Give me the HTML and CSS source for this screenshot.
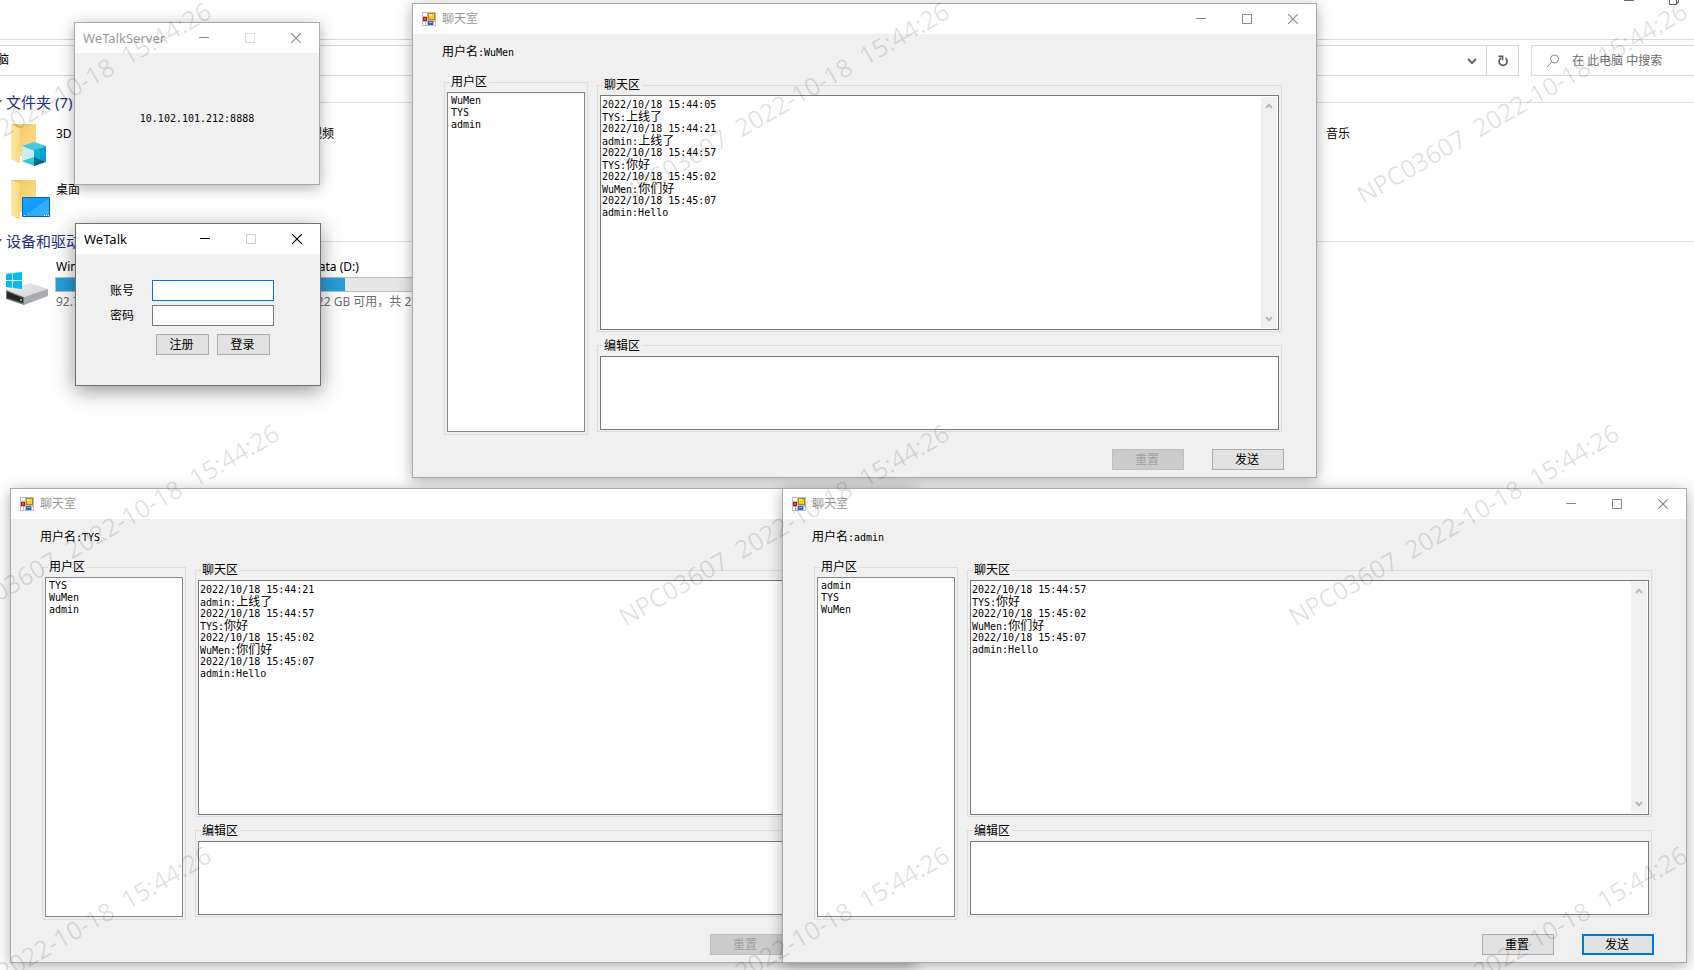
FILE: index.html
```html
<!DOCTYPE html>
<html lang="zh-CN">
<head>
<meta charset="utf-8">
<title>WeTalk</title>
<link rel="stylesheet" href="styles.css">
</head>
<body>
<svg class="defs" aria-hidden="true">
  <symbol id="i-min" viewBox="0 0 10 10"><path d="M0 4.5h10" fill="none" stroke="currentColor"/></symbol>
  <symbol id="i-max" viewBox="0 0 10 10"><path d="M.5.5h9v9h-9z" fill="none" stroke="currentColor"/></symbol>
  <symbol id="i-close" viewBox="0 0 10 10"><path d="M0 0l10 10M10 0L0 10" fill="none" stroke="currentColor" stroke-width="1.1"/></symbol>
  <symbol id="i-up" viewBox="0 0 8 6"><path d="M1 5l3-3.4L7 5" fill="none" stroke="currentColor" stroke-width="1.9"/></symbol>
  <symbol id="i-down" viewBox="0 0 8 6"><path d="M1 1l3 3.4L7 1" fill="none" stroke="currentColor" stroke-width="1.9"/></symbol>
  <symbol id="i-form" viewBox="0 0 14 14">
    <path d="M0 0h14v14H0z" fill="#b9bcc2"/>
    <path d="M1 1h4v3H1zM1 10h2v3H1zM4 10h1v3H4zM12 10h1v3h-1z" fill="#fff"/>
    <path d="M1 5h4v4H1z" fill="#b3160c"/><path d="M2 6h2v2H2z" fill="#e0604e"/>
    <path d="M6 1h7v7H6z" fill="#b98700"/><path d="M7 2h5v5H7z" fill="#fdc91c"/><path d="M7 2h3v2H7z" fill="#ffe68a"/>
    <path d="M6 9h5v4H6z" fill="#2f62c4"/><path d="M7 10h3v1H7z" fill="#86b2f4"/>
  </symbol>
  <symbol id="i-folder" viewBox="0 0 48 48">
    <path d="M5 4h25v32H12z" fill="url(#fold-b)"/>
    <path d="M5 4l9 4v36L5 39z" fill="url(#fold-f)"/>
  </symbol>
  <linearGradient id="fold-b" x1="0" y1="0" x2="1" y2="1"><stop offset="0" stop-color="#ecc463"/><stop offset="1" stop-color="#ffe08c"/></linearGradient>
  <linearGradient id="fold-f" x1="0" y1="0" x2="1" y2="0"><stop offset="0" stop-color="#ffe9a6"/><stop offset="1" stop-color="#fbd87f"/></linearGradient>
  <linearGradient id="blue" x1="0" y1="0" x2="1" y2="1"><stop offset="0" stop-color="#1ea3ff"/><stop offset=".5" stop-color="#0a9bff"/><stop offset=".51" stop-color="#2eacff"/><stop offset="1" stop-color="#38b0ff"/></linearGradient>
  <linearGradient id="metal" x1="0" y1="0" x2="1" y2="1"><stop offset="0" stop-color="#f0f0f2"/><stop offset="1" stop-color="#cfcfd3"/></linearGradient>
</svg>

<main class="desktop">
  <section class="explorer">
    <div class="caption">
      <svg class="glyph" viewBox="0 0 10 10"><path d="M0 5.500h10" stroke="#666"/></svg>
      <svg class="restore" viewBox="0 0 10 10"><path d="M.5 2.500h7v7h-7zM2.500 2V.5h7v7H8" fill="none" stroke="#666"/></svg>
    </div>
    <div class="toolbar">
      <div class="address">
        <span class="path">脑</span>
        <button class="tool" aria-label="展开"><svg viewBox="0 0 10 8"><path d="M1 2l4 4 4-4" fill="none" stroke="#666" stroke-width="2"/></svg></button>
        <button class="tool refresh" aria-label="刷新"><svg viewBox="0 0 12 12"><path d="M8.500 3.200A4 4 0 1 1 4 3" fill="none" stroke="#555" stroke-width="1.600"/><path d="M1.500 1.300h4v4" fill="none" stroke="#555" stroke-width="1.600"/></svg></button>
      </div>
      <label class="search">
        <svg viewBox="0 0 14 14"><circle cx="8.500" cy="5" r="4" fill="none" stroke="#888"/><path d="M5.700 8L1 13" stroke="#888"/></svg>
        <input type="text" aria-label="搜索" placeholder="在 此电脑 中搜索">
      </label>
    </div>
    <h2 class="group"><svg class="caret" viewBox="0 0 2 4"><path d="M0 0h2L0 3z" fill="#666"/></svg>文件夹 (7)</h2>
    <div class="tiles">
      <div class="tile">
        <svg class="pic" viewBox="0 0 48 48"><use href="#i-folder"/>
          <path d="M16 26l12-4 12 4-12 5z" fill="#4cc6e2"/><path d="M16 26l12 5v9l-12 2z" fill="#c9eff1"/><path d="M28 31l12-5v16l-12-4z" fill="#059bd4"/><path d="M28 30l6-2v12h-6z" fill="#08b3cf"/><path d="M16 41l12-4v9z" fill="#35c8d8"/><path d="M28 37l12 5-12 4z" fill="#04688c"/></svg>
        <span>3D</span>
      </div>
      <div class="tile second"><span class="pic"></span><span>视频</span></div>
      <div class="tile sixth"><span class="pic"></span><span>音乐</span></div>
      <div class="tile">
        <svg class="pic" viewBox="0 0 48 48"><use href="#i-folder"/><path d="M16.500 21.500h27v19h-27z" fill="url(#blue)" stroke="#0067ae"/><path d="M18 39.500h1M38 39.500h1M40 39.500h1M42 39.500h1" stroke="#fff"/></svg>
        <span>桌面</span>
      </div>
    </div>
    <h2 class="group"><svg class="caret" viewBox="0 0 2 4"><path d="M0 0h2L0 3z" fill="#666"/></svg>设备和驱动器 (2)</h2>
    <div class="tiles">
      <div class="tile">
        <svg class="pic drive-pic" viewBox="0 0 48 48">
          <path d="M0 27l24-7 18 6-24 8z" fill="url(#metal)"/><path d="M18 34l24-8v7L18 42z" fill="#a9abae"/><path d="M0 27l18 7v8L0 36z" fill="#77797c"/><path d="M1 28.500l16 6.500v5L1 35z" fill="#25272a"/><path d="M14 36h2v2h-2z" fill="#29e04a"/>
          <path d="M0 11l6-1v7H0zM7 10l9-1v8H7zM0 18h6v7l-6-1zM7 18h9v8l-9-1z" fill="#00bcf2"/></svg>
        <div class="drive"><span>Windows (C:)</span><div class="bar"><div class="fill" style="width:60%"></div></div><small>92.7 GB 可用</small></div>
      </div>
      <div class="tile second"><span class="pic"></span>
        <div class="drive"><span>Data (D:)</span><div class="bar"><div class="fill" style="width:17%"></div></div><small>222 GB 可用，共 223 GB</small></div>
      </div>
    </div>
  </section>

  <section class="window small server">
    <header class="titlebar"><h1>WeTalkServer</h1>
      <button aria-label="最小化"><svg><use href="#i-min"/></svg></button><button aria-label="最大化" disabled><svg><use href="#i-max"/></svg></button><button aria-label="关闭"><svg><use href="#i-close"/></svg></button></header>
    <div class="server-body"><span class="m">10.102.101.212:8888</span></div>
  </section>

  <section class="window small login active">
    <header class="titlebar"><h1>WeTalk</h1>
      <button aria-label="最小化"><svg><use href="#i-min"/></svg></button><button aria-label="最大化" disabled><svg><use href="#i-max"/></svg></button><button aria-label="关闭"><svg><use href="#i-close"/></svg></button></header>
    <form class="login-body">
      <label for="acc">账号</label><input id="acc" class="focus" type="text">
      <label for="pwd">密码</label><input id="pwd" type="password">
      <div class="login-actions"><button type="button" class="btn">注册</button><button type="button" class="btn">登录</button></div>
    </form>
  </section>

  <section class="window chat chat-wumen">
    <header class="titlebar"><svg class="form-icon"><use href="#i-form"/></svg><h1>聊天室</h1>
      <button aria-label="最小化"><svg><use href="#i-min"/></svg></button><button aria-label="最大化"><svg><use href="#i-max"/></svg></button><button aria-label="关闭"><svg><use href="#i-close"/></svg></button></header>
    <div class="chat-body">
      <p class="who">用户名<span class="m">:WuMen</span></p>
      <div class="columns">
        <fieldset><legend>用户区</legend><ul class="list m"><li>WuMen</li><li>TYS</li><li>admin</li></ul></fieldset>
        <div class="right">
          <fieldset class="grow"><legend>聊天区</legend><div class="log"><div class="lines">
            <p class="m">2022/10/18 15:44:05</p><p><span class="m">TYS:</span>上线了</p>
            <p class="m">2022/10/18 15:44:21</p><p><span class="m">admin:</span>上线了</p>
            <p class="m">2022/10/18 15:44:57</p><p><span class="m">TYS:</span>你好</p>
            <p class="m">2022/10/18 15:45:02</p><p><span class="m">WuMen:</span>你们好</p>
            <p class="m">2022/10/18 15:45:07</p><p class="m">admin:Hello</p></div>
            <div class="scroll"><svg><use href="#i-up"/></svg><svg><use href="#i-down"/></svg></div></div></fieldset>
          <fieldset class="edit"><legend>编辑区</legend><textarea aria-label="编辑区"></textarea></fieldset>
        </div>
      </div>
      <div class="actions"><button class="btn" disabled>重置</button><button class="btn">发送</button></div>
    </div>
  </section>

  <section class="window chat chat-tys">
    <header class="titlebar"><svg class="form-icon"><use href="#i-form"/></svg><h1>聊天室</h1></header>
    <div class="chat-body">
      <p class="who">用户名<span class="m">:TYS</span></p>
      <div class="columns">
        <fieldset><legend>用户区</legend><ul class="list m"><li>TYS</li><li>WuMen</li><li>admin</li></ul></fieldset>
        <div class="right">
          <fieldset class="grow"><legend>聊天区</legend><div class="log"><div class="lines">
            <p class="m">2022/10/18 15:44:21</p><p><span class="m">admin:</span>上线了</p>
            <p class="m">2022/10/18 15:44:57</p><p><span class="m">TYS:</span>你好</p>
            <p class="m">2022/10/18 15:45:02</p><p><span class="m">WuMen:</span>你们好</p>
            <p class="m">2022/10/18 15:45:07</p><p class="m">admin:Hello</p></div></div></fieldset>
          <fieldset class="edit"><legend>编辑区</legend><textarea aria-label="编辑区"></textarea></fieldset>
        </div>
      </div>
      <div class="actions"><button class="btn" disabled>重置</button><button class="btn" aria-label="发送"></button></div>
    </div>
  </section>

  <section class="window chat chat-admin">
    <header class="titlebar"><svg class="form-icon"><use href="#i-form"/></svg><h1>聊天室</h1>
      <button aria-label="最小化"><svg><use href="#i-min"/></svg></button><button aria-label="最大化"><svg><use href="#i-max"/></svg></button><button aria-label="关闭"><svg><use href="#i-close"/></svg></button></header>
    <div class="chat-body">
      <p class="who">用户名<span class="m">:admin</span></p>
      <div class="columns">
        <fieldset><legend>用户区</legend><ul class="list m"><li>admin</li><li>TYS</li><li>WuMen</li></ul></fieldset>
        <div class="right">
          <fieldset class="grow"><legend>聊天区</legend><div class="log"><div class="lines">
            <p class="m">2022/10/18 15:44:57</p><p><span class="m">TYS:</span>你好</p>
            <p class="m">2022/10/18 15:45:02</p><p><span class="m">WuMen:</span>你们好</p>
            <p class="m">2022/10/18 15:45:07</p><p class="m">admin:Hello</p></div>
            <div class="scroll"><svg><use href="#i-up"/></svg><svg><use href="#i-down"/></svg></div></div></fieldset>
          <fieldset class="edit"><legend>编辑区</legend><textarea aria-label="编辑区"></textarea></fieldset>
        </div>
      </div>
      <div class="actions"><button class="btn">重置</button><button class="btn default">发送</button></div>
    </div>
  </section>

  <div class="marks" aria-hidden="true">
    <span style="--x:208px;--y:8px">NPC03607&nbsp; 2022-10-18&nbsp; 15:44:26</span>
    <span style="--x:946px;--y:8px">NPC03607&nbsp; 2022-10-18&nbsp; 15:44:26</span>
    <span style="--x:1684px;--y:8px">NPC03607&nbsp; 2022-10-18&nbsp; 15:44:26</span>
    <span style="--x:276px;--y:430px">NPC03607&nbsp; 2022-10-18&nbsp; 15:44:26</span>
    <span style="--x:946px;--y:430px">NPC03607&nbsp; 2022-10-18&nbsp; 15:44:26</span>
    <span style="--x:1616px;--y:430px">NPC03607&nbsp; 2022-10-18&nbsp; 15:44:26</span>
    <span style="--x:208px;--y:852px">NPC03607&nbsp; 2022-10-18&nbsp; 15:44:26</span>
    <span style="--x:946px;--y:852px">NPC03607&nbsp; 2022-10-18&nbsp; 15:44:26</span>
    <span style="--x:1684px;--y:852px">NPC03607&nbsp; 2022-10-18&nbsp; 15:44:26</span>
  </div>
</main>
</body>
</html>
```

FILE: styles.css
```css
* { box-sizing: border-box; }
body { margin: 0; background: #fff; color: #000; font: 12px/12px "Noto Sans CJK SC", sans-serif; }
h1, h2, p, ul { margin: 0; padding: 0; font-weight: 400; }
ul { list-style: none; }
button, input, textarea { font: inherit; color: inherit; }
.defs { position: absolute; width: 0; height: 0; }
.m { font-family: "DejaVu Sans Mono", "Noto Sans CJK SC", monospace; font-size: 10px; }

.desktop { position: relative; min-height: 100vh; overflow: hidden; }

/* file explorer */
.explorer { font: 12px/16px "Noto Sans", "Noto Sans CJK SC", sans-serif; }
.caption { display: flex; justify-content: flex-end; gap: 35px; height: 40px; padding-right: 15px; border-bottom: 1px solid #d9d9d9; color: #666; }
.caption svg { width: 10px; height: 10px; margin-top: -5px; }
.toolbar { display: flex; gap: 12px; padding: 5px 0 14px; height: 50px; }
.address, .search { display: flex; border: 1px solid #d9d9d9; }
.address { flex: 1; border-left: 0; }
.path { flex: 1; padding-top: 6px; margin-left: -3px; }
.tool { display: flex; align-items: center; justify-content: center; width: 29px; padding: 0; border: 0; background: none; }
.tool svg { width: 10px; height: 8px; }
.refresh { width: 32px; border-left: 1px solid #d9d9d9; }
.refresh svg { width: 12px; height: 12px; }
.search { width: 163px; align-items: center; gap: 12px; padding-left: 14px; border-right: 0; }
.search svg { width: 14px; height: 14px; flex: none; }
.search input { min-width: 0; flex: 1; padding: 0; border: 0; outline: 0; background: none; }
.search input::placeholder { color: #6d6d6d; opacity: 1; }
.group { display: flex; align-items: center; gap: 4px; height: 24px; font-size: 15px; line-height: 22px; color: #1e3287; }
.group::after { content: ""; flex: 1; height: 1px; margin-left: 4px; background: #dedede; }
.caret { width: 2px; height: 4px; }
.tiles { display: grid; grid-template-columns: repeat(auto-fill, 254px); row-gap: 8px; padding: 6px 0 5px 6px; }
.tile { display: flex; gap: 2px; min-height: 48px; grid-column-start: 1; white-space: nowrap; }
.tile.second { grid-column-start: 2; grid-row: 1; }
.tile.sixth { grid-column-start: 6; grid-row: 1; }
.tile > span:last-child { padding-top: 6px; }
.pic { width: 48px; height: 48px; flex: none; }
.drive { display: flex; flex-direction: column; width: 210px; }
.drive small { font-size: 12px; line-height: 20px; color: #6d6d6d; }
.bar { height: 15px; margin: 2px 0 0 -1px; border: 1px solid #bcbcbc; background: #e6e6e6; }
.fill { height: 100%; background: #26a0da; }
.drive-pic { margin-top: 4px; }

/* windows */
.window { position: absolute; display: flex; flex-direction: column; border: 1px solid #aaa; background: #f0f0f0; box-shadow: 0 3px 14px rgba(0, 0, 0, .32); }
.window.active { border-color: #707070; box-shadow: 0 5px 20px rgba(0, 0, 0, .42); }
.small { width: 246px; height: 163px; }
.server { left: 74px; top: 22px; }
.login { left: 75px; top: 223px; }
.chat { width: 905px; height: 475px; }
.chat-wumen { left: 412px; top: 3px; }
.chat-tys { left: 10px; top: 488px; }
.chat-admin { left: 782px; top: 488px; }

.titlebar { display: flex; align-items: center; flex: none; height: 30px; padding-left: 8px; background: #fff; color: #999; }
.titlebar h1 { flex: 1; font: 13px/16px "Noto Sans", "Noto Sans CJK SC", sans-serif; }
.titlebar button { display: flex; align-items: center; justify-content: center; width: 46px; height: 28px; padding: 0; border: 0; background: none; color: #888; }
.titlebar button:disabled { color: #ddd; }
.titlebar button svg { width: 10px; height: 10px; }
.chat .titlebar { padding-left: 9px; }
.chat .titlebar h1 { font-size: 12px; }
.form-icon { width: 14px; height: 14px; margin-right: 6px; }
.active .titlebar, .active .titlebar button { color: #000; }
.active .titlebar button:disabled { color: #ccc; }

.server-body { flex: 1; display: flex; align-items: center; justify-content: center; }
.login-body { display: grid; grid-template-columns: 24px 122px; column-gap: 18px; row-gap: 4px; align-items: center; padding: 26px 34px 0; }
.login-body label { padding-bottom: 2px; }
.login-body input { height: 21px; padding: 0 3px; border: 1px solid #7a7a7a; background: #fff; outline: 0; }
.login-body .focus { border-color: #0078d7; }
.login-actions { grid-column: 2; display: flex; gap: 8px; padding: 4px; }
.btn { width: 72px; height: 21px; padding: 0 2px 2px 0; border: 1px solid #adadad; background: #e1e1e1; line-height: 12px; }
.login-actions .btn { width: 53px; }
.btn:disabled { border-color: #bfbfbf; background: #ccc; color: #a0a0a0; }
.btn.default { border: 2px solid #0078d7; }

.chat-body { flex: 1; min-height: 0; display: flex; flex-direction: column; padding: 11px 32px 7px 29px; }
.who { height: 12px; margin-bottom: 19px; line-height: 12px; }
.columns { flex: 1; min-height: 0; display: grid; grid-template-columns: 144px minmax(0, 1fr); gap: 9px; padding: 0 2px; }
fieldset { display: flex; min-width: 0; margin: 0; padding: 4px 2px 2px; border: 1px solid #dcdcdc; }
legend { margin-left: 3px; padding: 0 2px 0 1px; line-height: 10px; height: 12px; }
.right { display: flex; flex-direction: column; gap: 7px; padding: 3px 0; }
.right fieldset { padding-bottom: 1px; }
.grow { flex: 1; min-height: 0; }
.right .edit legend { line-height: 12px; }
.right .edit { padding-top: 5px; }
.list { flex: 1; padding: 2px 3px; border: 1px solid #828790; background: #fff; line-height: 12px; }
.log { flex: 1; display: flex; justify-content: space-between; padding: 1px; border: 1px solid #7a7a7a; background: #fff; }
.lines { padding: 2px 0; }
.lines p { height: 12px; line-height: 10px; }
.lines p.m { line-height: 12px; }
.scroll { display: flex; flex-direction: column; align-items: center; justify-content: space-between; width: 16px; padding: 6px 0; background: #f0f0f0; color: #b8b8b8; }
.scroll svg { width: 8px; height: 6px; }
textarea { flex: 1; display: block; min-width: 0; height: 74px; padding: 2px; border: 1px solid #7a7a7a; border-radius: 0; background: #fff; resize: none; outline: 0; }
.actions { display: flex; justify-content: flex-end; gap: 28px; margin-top: 14px; }

/* diagonal watermark over the whole desktop */
.marks { position: absolute; inset: 0; overflow: hidden; pointer-events: none; }
.marks span { position: absolute; right: calc(100% - var(--x)); top: calc(var(--y) - 12px); font: 400 25px/24px "Open Sans", sans-serif; color: rgba(0, 0, 0, .12); white-space: nowrap; transform: rotate(-30deg); transform-origin: right center; }
```
